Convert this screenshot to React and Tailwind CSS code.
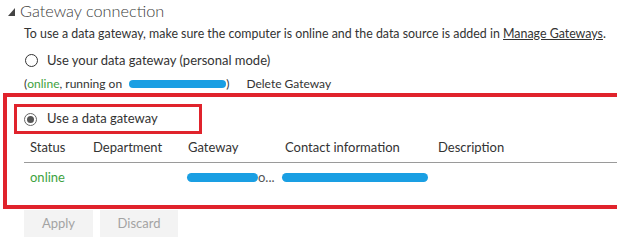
import React from "react";

function Radio({ checked }) {
  return (
    <span
      className={
        "flex items-center justify-center w-[13px] h-[13px] rounded-full border shrink-0 " +
        (checked ? "border-[#666]" : "border-[#333]")
      }
    >
      {checked && <span className="w-[7px] h-[7px] rounded-full bg-[#555]" />}
    </span>
  );
}

function Blob({ className }) {
  return <span className={"inline-block rounded-full bg-[#1a9fe3] " + className} />;
}

export default function App() {
  return (
    <div className="w-[617px] h-[242px] overflow-hidden bg-white font-['Lato',sans-serif] text-[#333]">
      <div className="flex items-center h-[23px] pl-[8px] gap-[5px]">
        <svg width="7" height="8" viewBox="0 0 7 8">
          <polygon points="7,0 7,8 0,8" fill="#444" />
        </svg>
        <span className="text-[16.3px] font-light text-[#3b3b3b]">Gateway connection</span>
      </div>
      <div className="flex items-center h-[22px] pl-[24px] text-[12.4px]">
        <span>
          To use a data gateway, make sure the computer is online and the data source is added in{" "}
          <span className="underline">Manage Gateways</span>.
        </span>
      </div>
      <div className="flex items-center h-[31px] pl-[25px] gap-[9px] text-[13px]">
        <Radio />
        <span>Use your data gateway (personal mode)</span>
      </div>
      <div className="flex items-center h-[15px] pl-[24px] text-[12px]">
        <span>(</span>
        <span className="text-[#3ea23e]">online</span>
        <span>, running on&nbsp;</span>
        <Blob className="ml-[4px] w-[97px] h-[8px]" />
        <span>)</span>
        <span className="ml-[17px]">Delete Gateway</span>
      </div>
      <div className="mt-[2px] ml-[3px] w-[640px] h-[116px] border-4 border-[#e0232c]">
        <div className="mt-[7px] ml-[7px] w-[188px] h-[30px] border-[3px] border-[#e0232c] flex items-center pl-[7px] gap-[10px] text-[13px]">
          <Radio checked />
          <span>Use a data gateway</span>
        </div>
        <div className="ml-[17px] h-[29px] border-b border-[#9a9a9a] flex items-center pl-[6px] text-[13px]">
          <span className="w-[63px]">Status</span>
          <span className="w-[95px]">Department</span>
          <span className="w-[97px]">Gateway</span>
          <span className="w-[153px]">Contact information</span>
          <span>Description</span>
        </div>
        <div className="ml-[17px] h-[29px] flex items-center pl-[6px] text-[13px]">
          <span className="w-[157px] text-[#3ea23e]">online</span>
          <span className="w-[95px] flex items-center">
            <Blob className="w-[71px] h-[9px]" />
            <span className="text-[#555]">o...</span>
          </span>
          <span className="flex items-center">
            <Blob className="w-[146px] h-[9px]" />
          </span>
        </div>
      </div>
      <div className="flex gap-[7px] mt-[1px] ml-[24px] text-[13px] text-[#a3a3a3]">
        <div className="w-[69px] h-[27px] bg-[#f3f3f3] flex items-center justify-center">Apply</div>
        <div className="w-[78px] h-[27px] bg-[#f3f3f3] flex items-center justify-center">Discard</div>
      </div>
    </div>
  );
}
